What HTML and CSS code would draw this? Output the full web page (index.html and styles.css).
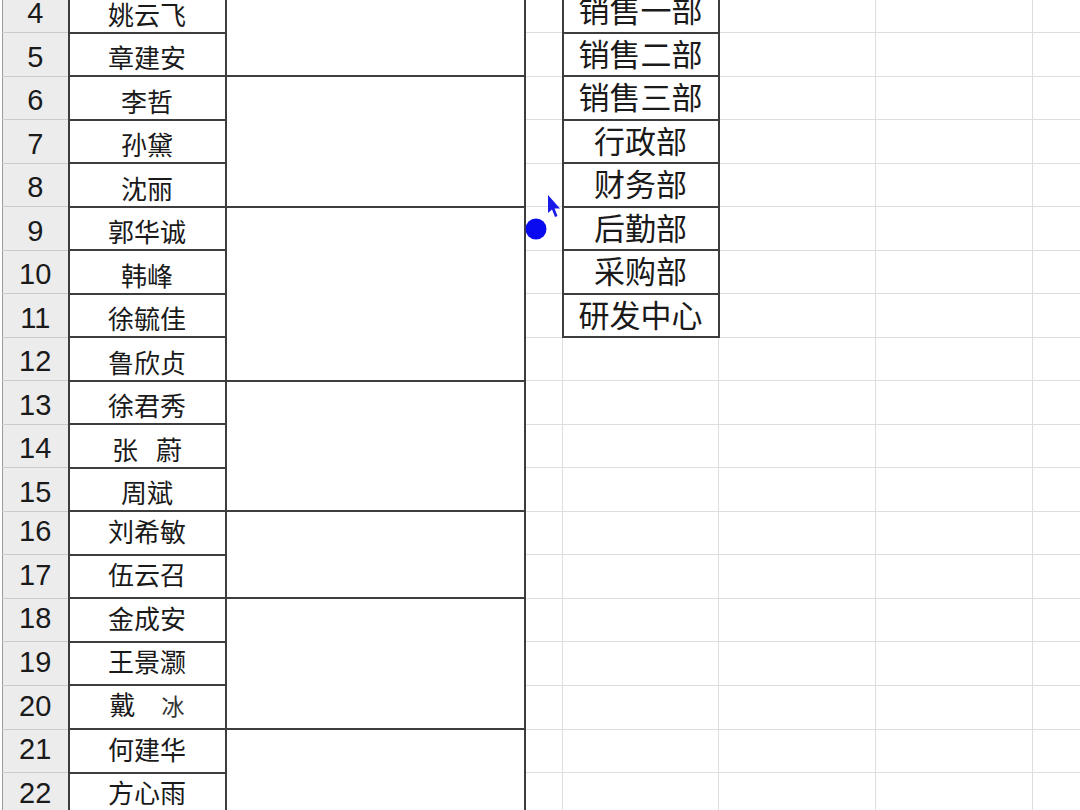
FILE: index.html
```html
<!DOCTYPE html>
<html lang="zh">
<head>
<meta charset="utf-8">
<link rel="stylesheet" href="styles.css">
</head>
<body>
<div class="sheet">
<table class="grid">
<colgroup>
<col class="c-hd"><col class="c-b"><col class="c-c"><col class="c-f"><col class="c-g"><col class="c-h"><col class="c-i"><col class="c-j">
</colgroup>
<tbody>
<tr><th>4</th><td class="name">姚云飞</td><td class="merge" rowspan="2"></td><td class="gap gap-d"></td><td class="dept">销售一部</td><td></td><td></td><td></td></tr>
<tr><th>5</th><td class="name">章建安</td><td class="gap gap-d"></td><td class="dept">销售二部</td><td></td><td></td><td></td></tr>
<tr><th>6</th><td class="name">李哲</td><td class="merge" rowspan="3"></td><td class="gap gap-d"></td><td class="dept">销售三部</td><td></td><td></td><td></td></tr>
<tr><th>7</th><td class="name">孙黛</td><td class="gap gap-d"></td><td class="dept">行政部</td><td></td><td></td><td></td></tr>
<tr><th>8</th><td class="name">沈丽</td><td class="gap gap-d"></td><td class="dept">财务部</td><td></td><td></td><td></td></tr>
<tr><th>9</th><td class="name">郭华诚</td><td class="merge" rowspan="4"></td><td class="gap gap-d"></td><td class="dept">后勤部</td><td></td><td></td><td></td></tr>
<tr><th>10</th><td class="name">韩峰</td><td class="gap gap-d"></td><td class="dept">采购部</td><td></td><td></td><td></td></tr>
<tr><th>11</th><td class="name">徐毓佳</td><td class="gap gap-d"></td><td class="dept">研发中心</td><td></td><td></td><td></td></tr>
<tr><th>12</th><td class="name">鲁欣贞</td><td class="gap"></td><td></td><td></td><td></td><td></td></tr>
<tr><th>13</th><td class="name">徐君秀</td><td class="merge" rowspan="3"></td><td class="gap"></td><td></td><td></td><td></td><td></td></tr>
<tr><th>14</th><td class="name">张<span class="sp1"></span>蔚</td><td class="gap"></td><td></td><td></td><td></td><td></td></tr>
<tr><th>15</th><td class="name">周斌</td><td class="gap"></td><td></td><td></td><td></td><td></td></tr>
<tr class="hi"><th>16</th><td class="name">刘希敏</td><td class="merge" rowspan="2"></td><td class="gap"></td><td></td><td></td><td></td><td></td></tr>
<tr class="hi"><th>17</th><td class="name">伍云召</td><td class="gap"></td><td></td><td></td><td></td><td></td></tr>
<tr class="hi"><th>18</th><td class="name">金成安</td><td class="merge" rowspan="3"></td><td class="gap"></td><td></td><td></td><td></td><td></td></tr>
<tr class="hi"><th>19</th><td class="name">王景灏</td><td class="gap"></td><td></td><td></td><td></td><td></td></tr>
<tr class="hi"><th>20</th><td class="name">戴<span class="sp2"></span><span class="light">冰</span></td><td class="gap"></td><td></td><td></td><td></td><td></td></tr>
<tr class="hi"><th>21</th><td class="name">何建华</td><td class="merge" rowspan="2"></td><td class="gap"></td><td></td><td></td><td></td><td></td></tr>
<tr class="hi"><th>22</th><td class="name">方心雨</td><td class="gap"></td><td></td><td></td><td></td><td></td></tr>
</tbody>
</table>
<svg class="pointer" width="50" height="60" viewBox="0 0 50 60" aria-hidden="true">
  <circle cx="16" cy="39" r="10.5" fill="#0a0af0"/>
  <path d="M28 5 L28 23 L32 19.5 L35 27 L37.5 26 L34.6 18.6 L40 18.4 Z" fill="#1a1ae8"/>
</svg>
</div>
</body>
</html>
```

FILE: styles.css
```css
html, body {
  margin: 0;
  padding: 0;
  background: #ffffff;
  overflow: hidden;
}

.sheet {
  position: relative;
  width: 1080px;
  height: 810px;
  overflow: hidden;
  background: #ffffff;
}

.grid {
  border-collapse: collapse;
  table-layout: fixed;
  width: 1120px;
  margin-top: -12px;
  margin-left: 2px;
  font-family: "Noto Sans CJK SC", "Noto Sans", sans-serif;
  color: #1a1a1a;
}

.c-hd { width: 66px; }
.c-b { width: 157px; }
.c-c { width: 299px; }
.c-f { width: 38px; }
.c-g { width: 156px; }
.c-h { width: 157px; }
.c-i { width: 157px; }
.c-j { width: 90px; }

.grid tr { height: 43.5px; }

.grid td,
.grid th {
  padding: 0;
  border: 1.5px solid #dedede;
  overflow: hidden;
  white-space: nowrap;
}

.grid th {
  background: #ececec;
  font-family: "Liberation Sans", Arial, sans-serif;
  font-weight: normal;
  font-size: 29px;
  color: #1a1a1a;
  text-align: center;
  vertical-align: bottom;
  padding-bottom: 1px;
  line-height: 36px;
  border-top: 1px solid #cbcbcb;
  border-bottom: 1px solid #cbcbcb;
  border-left: 1px solid #9a9a9a;
  border-right: 1.5px solid #ababab;
}

.grid td.name {
  border: 2px solid #3d3d3d;
  text-align: center;
  vertical-align: bottom;
  font-size: 26px;
  line-height: 36px;
  padding-bottom: 0;
}

.grid tr.hi th {
  padding-bottom: 5px;
}

.grid tr.hi td.name {
  padding-bottom: 5px;
}

.grid td.merge {
  border: 2px solid #3d3d3d;
}

.grid td.gap {
  border-left: 2px solid #3d3d3d;
}

.grid td.gap-d {
  border-right: 2px solid #3d3d3d;
}

.grid td.dept {
  border: 2px solid #3d3d3d;
  text-align: center;
  vertical-align: middle;
  font-size: 31px;
  line-height: 38px;
  padding-bottom: 3px;
}

.sp1 {
  display: inline-block;
  width: 18px;
}

.sp2 {
  display: inline-block;
  width: 26px;
}

.light {
  font-size: 23px;
  color: #333333;
}

.pointer {
  position: absolute;
  left: 520px;
  top: 190px;
}
```
